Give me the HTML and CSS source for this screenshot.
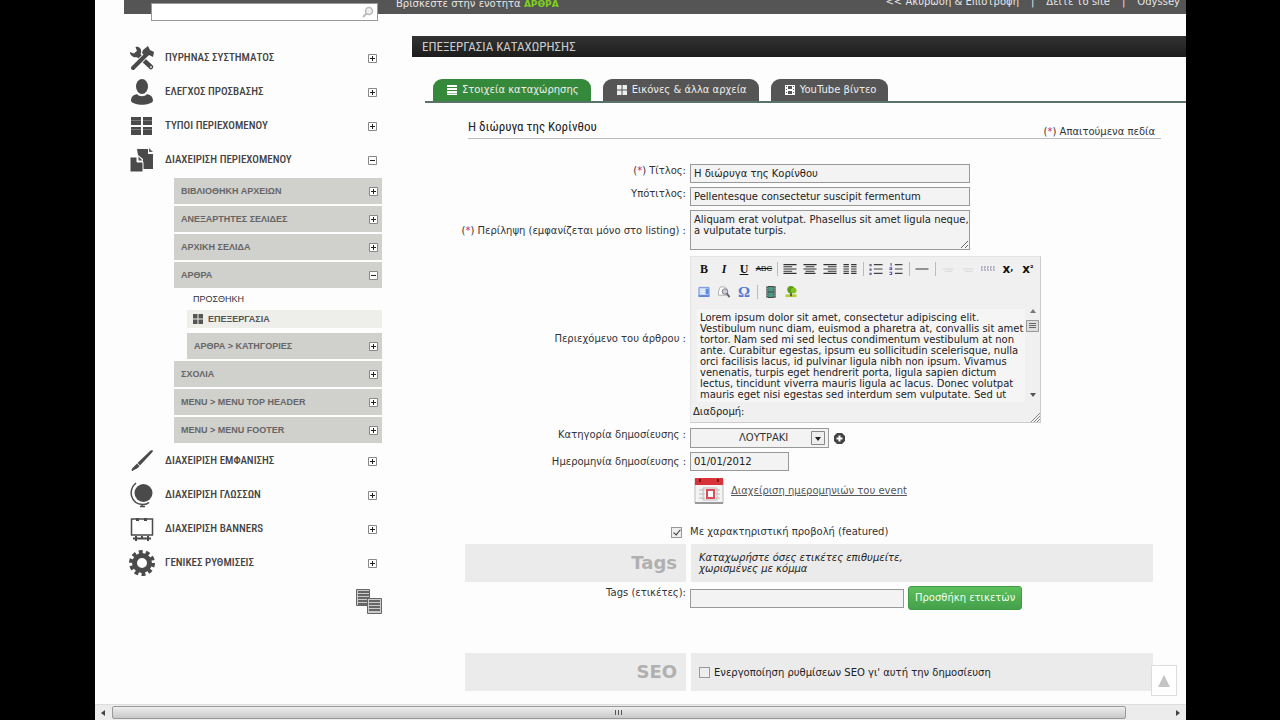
FILE: index.html
```html
<!DOCTYPE html>
<html lang="el">
<head>
<meta charset="utf-8">
<title>Επεξεργασία καταχώρησης</title>
<link rel="stylesheet" href="styles.css">
</head>
<body>
<svg class="defs" aria-hidden="true">
  <symbol id="plus" viewBox="0 0 9 9"><path d="M.5.5h8v8h-8z" fill="#fff" stroke="#888"/><path d="M2 4.500h5M4.500 2v5" stroke="#222"/></symbol>
  <symbol id="minus" viewBox="0 0 9 9"><path d="M.5.5h8v8h-8z" fill="#fff" stroke="#888"/><path d="M2 4.500h5" stroke="#222"/></symbol>
  <symbol id="grid4" viewBox="0 0 10 10"><path d="M0 0h4.500v4.500H0zM5.500 0H10v4.500H5.500zM0 5.500h4.500V10H0zM5.500 5.500H10V10H5.500z" fill="currentColor"/></symbol>
</svg>
<div class="window">
  <header class="topbar">
    <form class="search"><input type="search" aria-label="Αναζήτηση">
      <svg class="lens" viewBox="0 0 12 12"><circle cx="7" cy="5" r="3.500" fill="#eee" stroke="#bbb" stroke-width="1.500"/><path d="M4.500 7.500 1 11" stroke="#bbb" stroke-width="2"/></svg>
    </form>
    <p class="where">Βρίσκεστε στην ενότητα <b>ΑΡΘΡΑ</b></p>
    <nav class="toplinks"><a href="#">&lt;&lt; Ακύρωση &amp; Επιστροφή</a><span>|</span><a href="#">Δείτε το site</a><span>|</span><a href="#">Odyssey</a></nav>
  </header>
  <div class="main">
    <nav class="sidebar">
      <ul class="menu">
        <li><a href="#" class="item">
          <svg class="ico" viewBox="0 0 26 26"><path d="M8 9 22 22" stroke="#4a4a4a" stroke-width="4.500" stroke-linecap="round"/><path d="M1 7l4 1.500L8 6 6.500 2C10 1 13 4 12 8l-3 4C5 13 1 11 1 7z" fill="#4a4a4a"/><path d="M4 23 18 9" stroke="#fdfdfd" stroke-width="6"/><path d="M4 23 18 9" stroke="#4a4a4a" stroke-width="4" stroke-linecap="round"/><path d="M14 5l5-4 2 4 4 2-1 5-4-2-3 2-4-4z" fill="#4a4a4a"/><circle cx="22" cy="22" r="1" fill="#ddd"/></svg>
          <span>ΠΥΡΗΝΑΣ ΣΥΣΤΗΜΑΤΟΣ</span><svg class="box"><use href="#plus"/></svg></a></li>
        <li><a href="#" class="item">
          <svg class="ico" viewBox="0 0 26 26"><ellipse cx="13" cy="7.500" rx="6" ry="7.500" fill="#4a4a4a"/><path d="M2 22c0-5 3-6 6-7 2 3 8 3 10 0 3 1 6 2 6 7-3 5-19 5-22 0z" fill="#4a4a4a"/></svg>
          <span>ΕΛΕΓΧΟΣ ΠΡΟΣΒΑΣΗΣ</span><svg class="box"><use href="#plus"/></svg></a></li>
        <li><a href="#" class="item">
          <svg class="ico" viewBox="0 0 26 26"><path d="M2 4h10v8H2zM14 4h9v8h-9zM2 14h10v8H2zM14 14h9v8h-9z" fill="#4a4a4a"/><path d="M2 7.500h10M14 7.500h9M2 16.500h10M14 16.500h9" stroke="#777"/></svg>
          <span>ΤΥΠΟΙ ΠΕΡΙΕΧΟΜΕΝΟΥ</span><svg class="box"><use href="#plus"/></svg></a></li>
        <li><a href="#" class="item">
          <svg class="ico" viewBox="0 0 26 26"><path d="M8 2h11v5h5v15H14V12L9 8z" fill="#4a4a4a"/><path d="M20 1l4 4h-4z" fill="#666"/><path d="M1 10h7v5h6v10H1z" fill="#4a4a4a" stroke="#fdfdfd"/><path d="M9.500 9.500l4 4h-4z" fill="#555"/></svg>
          <span>ΔΙΑΧΕΙΡΙΣΗ ΠΕΡΙΕΧΟΜΕΝΟΥ</span><svg class="box"><use href="#minus"/></svg></a>
          <ul class="submenu">
            <li><a href="#" class="sub"><span>ΒΙΒΛΙΟΘΗΚΗ ΑΡΧΕΙΩΝ</span><svg class="box"><use href="#plus"/></svg></a></li>
            <li><a href="#" class="sub"><span>ΑΝΕΞΑΡΤΗΤΕΣ ΣΕΛΙΔΕΣ</span><svg class="box"><use href="#plus"/></svg></a></li>
            <li><a href="#" class="sub"><span>ΑΡΧΙΚΗ ΣΕΛΙΔΑ</span><svg class="box"><use href="#plus"/></svg></a></li>
            <li><a href="#" class="sub"><span>ΑΡΘΡΑ</span><svg class="box"><use href="#minus"/></svg></a>
              <ul class="leafs">
                <li><a href="#" class="leaf">ΠΡΟΣΘΗΚΗ</a></li>
                <li><a href="#" class="leaf current"><svg class="mini"><use href="#grid4"/></svg>ΕΠΕΞΕΡΓΑΣΙΑ</a></li>
                <li><a href="#" class="sub"><span>ΑΡΘΡΑ &gt; ΚΑΤΗΓΟΡΙΕΣ</span><svg class="box"><use href="#plus"/></svg></a></li>
              </ul></li>
            <li><a href="#" class="sub"><span>ΣΧΟΛΙΑ</span><svg class="box"><use href="#plus"/></svg></a></li>
            <li><a href="#" class="sub"><span>MENU &gt; MENU TOP HEADER</span><svg class="box"><use href="#plus"/></svg></a></li>
            <li><a href="#" class="sub"><span>MENU &gt; MENU FOOTER</span><svg class="box"><use href="#plus"/></svg></a></li>
          </ul></li>
        <li><a href="#" class="item">
          <svg class="ico" viewBox="0 0 26 26"><path d="M23 2c1 0 1 1 .500 2L11 17.500 8.500 15 21 3z" fill="#4a4a4a"/><path d="M8 15.500l2.500 2.500c-2 3-4 3-7 5-1.500 0-1-1.500 0-3z" fill="#4a4a4a"/></svg>
          <span>ΔΙΑΧΕΙΡΙΣΗ ΕΜΦΑΝΙΣΗΣ</span><svg class="box"><use href="#plus"/></svg></a></li>
        <li><a href="#" class="item">
          <svg class="ico" viewBox="0 0 26 26"><circle cx="14.500" cy="11" r="9" fill="#4a4a4a"/><path d="M7 1C-1 8 1 22 14 22.500c3 0 5-1 6-2M13 22v3M11 24.500h5" fill="none" stroke="#4a4a4a" stroke-width="1.500"/></svg>
          <span>ΔΙΑΧΕΙΡΙΣΗ ΓΛΩΣΣΩΝ</span><svg class="box"><use href="#plus"/></svg></a></li>
        <li><a href="#" class="item">
          <svg class="ico" viewBox="0 0 26 26"><path d="M2.500 3h21v16h-21z" fill="#fff" stroke="#4a4a4a" stroke-width="1.500"/><path d="M7 2h3v3H7zM15 2h3v3h-3z" fill="#4a4a4a"/><path d="M4 22.500h18M7 20v5M19 20v5M13 20v2" stroke="#4a4a4a" stroke-width="2"/></svg>
          <span>ΔΙΑΧΕΙΡΙΣΗ BANNERS</span><svg class="box"><use href="#plus"/></svg></a></li>
        <li><a href="#" class="item">
          <svg class="ico" viewBox="0 0 26 26"><circle cx="13" cy="13" r="7.500" fill="none" stroke="#4a4a4a" stroke-width="5"/><circle cx="13" cy="13" r="11" fill="none" stroke="#4a4a4a" stroke-width="4" stroke-dasharray="3.800 3.110"/></svg>
          <span>ΓΕΝΙΚΕΣ ΡΥΘΜΙΣΕΙΣ</span><svg class="box"><use href="#plus"/></svg></a></li>
      </ul>
      <button class="collapse" aria-label="Σύμπτυξη μενού"><svg viewBox="0 0 26 26"><path d="M.5.5h13v16H.5z" fill="#ccc" stroke="#666"/><path d="M2 3h11M2 6h11M2 9h11M2 12h11M2 15h11" stroke="#444" stroke-width="1.500"/><path d="M11.500 9.500h14v15h-14z" fill="#ccc" stroke="#666"/><path d="M13 12h11M13 15h11M13 18h11M13 21h11" stroke="#444" stroke-width="1.500"/></svg></button>
    </nav>
    <main class="content">
      <h1>ΕΠΕΞΕΡΓΑΣΙΑ ΚΑΤΑΧΩΡΗΣΗΣ</h1>
      <nav class="tabs">
        <a href="#" class="tab active"><svg class="mini" viewBox="0 0 10 10"><path d="M0 1h10M0 4h10M0 7h10M0 9.500h10" stroke="#fff" stroke-width="2"/></svg>Στοιχεία καταχώρησης</a>
        <a href="#" class="tab"><svg class="mini"><use href="#grid4"/></svg>Εικόνες &amp; άλλα αρχεία</a>
        <a href="#" class="tab"><svg class="mini" viewBox="0 0 10 10"><path d="M0 0h10v10H0z" fill="#fff"/><path d="M3 1h4v3H3zM3 6h4v3H3zM1 1h1v1H1zM1 4h1v1H1zM1 7h1v1H1zM8 1h1v1H8zM8 4h1v1H8zM8 7h1v1H8z" fill="#555"/></svg>YouTube βίντεο</a>
      </nav>
      <div class="heading"><h2>Η διώρυγα της Κορίνθου</h2><p>(<i class="req">*</i>) Απαιτούμενα πεδία</p></div>
      <form class="fields">
        <div class="row"><label for="f1">(<i class="req">*</i>) Τίτλος:</label><input id="f1" class="text wide" value="Η διώρυγα της Κορίνθου"></div>
        <div class="row"><label for="f2">Υπότιτλος:</label><input id="f2" class="text wide" value="Pellentesque consectetur suscipit fermentum"></div>
        <div class="row mid"><label for="f3">(<i class="req">*</i>) Περίληψη (εμφανίζεται μόνο στο listing) :</label><textarea id="f3" class="text summary">Aliquam erat volutpat. Phasellus sit amet ligula neque,
a vulputate turpis.</textarea></div>
        <div class="row mid"><label for="f4">Περιεχόμενο του άρθρου :</label>
          <div class="editor">
            <div class="tools">
              <button type="button" class="b">B</button><button type="button" class="i">I</button><button type="button" class="u">U</button><button type="button" class="s">ABC</button><hr>
              <button type="button" aria-label="Αριστερά"><svg viewBox="0 0 12 11"><path d="M0 1.500h12M0 3.500h8M0 5.500h12M0 7.500h8M0 9.500h12" stroke="#333"/></svg></button>
              <button type="button" aria-label="Κέντρο"><svg viewBox="0 0 12 11"><path d="M0 1.500h12M2 3.500h8M0 5.500h12M2 7.500h8M1 9.500h10" stroke="#333"/></svg></button>
              <button type="button" aria-label="Δεξιά"><svg viewBox="0 0 12 11"><path d="M0 1.500h12M4 3.500h8M0 5.500h12M4 7.500h8M0 9.500h12" stroke="#333"/></svg></button>
              <button type="button" aria-label="Πλήρης"><svg viewBox="0 0 12 11"><path d="M0 1.500h5M7 1.500h5M0 3.500h5M7 3.500h5M0 5.500h5M7 5.500h5M0 7.500h5M7 7.500h5M0 9.500h5M7 9.500h5" stroke="#333"/></svg></button><hr>
              <button type="button" aria-label="Κουκκίδες"><svg viewBox="0 0 12 11"><path d="M4 1.500h8M4 5.500h8M4 9.500h8" stroke="#444"/><path d="M0 1h2v2H0zM0 5h2v2H0zM0 9h2v2H0z" fill="#668"/></svg></button>
              <button type="button" aria-label="Αρίθμηση"><svg viewBox="0 0 12 11"><path d="M5 1.500h7M5 5.500h7M5 9.500h7" stroke="#444"/><path d="M1.500 0v3M0 4.500h2v1.500H0M0 8.500h2v2H0" fill="none" stroke="#55a"/></svg></button><hr>
              <button type="button" aria-label="Γραμμή"><svg viewBox="0 0 12 11"><path d="M0 5.500h12" stroke="#444"/></svg></button><hr>
              <button type="button" aria-label="Αναίρεση"><svg viewBox="0 0 12 11"><path d="M1 5.500h10M3 7.500h7" stroke="#d8d8dc"/></svg></button>
              <button type="button" aria-label="Επανάληψη"><svg viewBox="0 0 12 11"><path d="M1 5.500h10M3 7.500h7" stroke="#d8d8dc"/></svg></button>
              <button type="button" aria-label="Άγκυρα"><svg viewBox="0 0 14 11"><path d="M0 3.500h14M0 6.500h14" stroke="#88a" stroke-dasharray="2 1"/><path d="M0 5h14" stroke="#aab" stroke-dasharray="1 2"/></svg></button>
              <button type="button" class="x">x<sub>,</sub></button><button type="button" class="x">x<sup>²</sup></button>
            </div>
            <div class="tools">
              <button type="button" aria-label="Πίνακας"><svg viewBox="0 0 14 13"><path d="M1.500 1.500h11v9h-11z" fill="#bcd4fa" stroke="#6f93d8"/><path d="M3 4h5M3 6h5M3 8h5" stroke="#fff"/><path d="M9 3h3v6H9zM1 10h12v2H1z" fill="#5d86dc"/></svg></button>
              <button type="button" aria-label="Προεπισκόπηση"><svg viewBox="0 0 14 13"><path d="M3 1h5l2 2v7H1V6z" fill="#fff" stroke="#aaa"/><circle cx="8" cy="6" r="3" fill="#ccd" stroke="#777"/><path d="M10 8l3 4" stroke="#666" stroke-width="2"/></svg></button>
              <button type="button" class="omega">Ω</button><hr class="gap">
              <button type="button" aria-label="Βίντεο"><svg viewBox="0 0 14 13"><path d="M2 0h10v13H2z" fill="#444"/><path d="M4 1h6v5H4zM4 7h6v5H4z" fill="#4a9a86"/><path d="M3 0v13M11 0v13" stroke="#ccc" stroke-dasharray="1 1"/></svg></button>
              <button type="button" aria-label="Εικόνα"><svg viewBox="0 0 14 13"><path d="M1 9h12v3H1z" fill="#b3cf35"/><path d="M6 6h2v5H6z" fill="#554"/><circle cx="7" cy="4" r="4" fill="#5a9e16"/><circle cx="10" cy="5" r="3" fill="#82c01e"/></svg></button>
            </div>
            <div class="body">
              <textarea id="f4">Lorem ipsum dolor sit amet, consectetur adipiscing elit.
Vestibulum nunc diam, euismod a pharetra at, convallis sit amet
tortor. Nam sed mi sed lectus condimentum vestibulum at non
ante. Curabitur egestas, ipsum eu sollicitudin scelerisque, nulla
orci facilisis lacus, id pulvinar ligula nibh non ipsum. Vivamus
venenatis, turpis eget hendrerit porta, ligula sapien dictum
lectus, tincidunt viverra mauris ligula ac lacus. Donec volutpat
mauris eget nisi egestas sed interdum sem vulputate. Sed ut</textarea>
              <div class="vbar"><svg viewBox="0 0 6 4"><path d="M3 0l3 4H0z" fill="#777"/></svg><svg class="thumb" viewBox="0 0 13 12"><path d="M.5.500h12v11H.5z" fill="#ddd" stroke="#999"/><path d="M3 3.500h7M3 5.500h7M3 7.500h7" stroke="#666"/></svg><svg class="down" viewBox="0 0 6 4"><path d="M0 0h6L3 4z" fill="#555"/></svg></div>
            </div>
            <div class="path"><span>Διαδρομή:</span><svg viewBox="0 0 10 10"><path d="M1 10l9-9M4 10l6-6M7 10l3-3" stroke="#888"/></svg></div>
          </div></div>
        <div class="row category"><label for="f5">Κατηγορία δημοσίευσης :</label><div class="line"><span class="pick"><select id="f5"><option>ΛΟΥΤΡΑΚΙ</option></select><svg viewBox="0 0 14 14"><path d="M.5.500h13v13H.5z" fill="#eee" stroke="#888"/><path d="M4 6h6l-3 4z" fill="#222"/></svg></span><button type="button" class="add" aria-label="Προσθήκη"><svg viewBox="0 0 11 11"><path d="M3 0h5l3 3v5l-3 3H3L0 8V3z" fill="#444"/><path d="M5.500 2.500v6M2.500 5.500h6" stroke="#fff" stroke-width="2"/></svg></button></div></div>
        <div class="row mid"><label for="f6">Ημερομηνία δημοσίευσης :</label><input id="f6" class="text date" value="01/01/2012"></div>
        <div class="row event"><div class="line"><svg class="cal" viewBox="0 0 30 28"><path d="M1 2h28v24H1z" fill="#f4f4f4" stroke="#bbb"/><path d="M1 25h28v2H1z" fill="#999"/><path d="M1 1h28v7H1z" fill="#d8333b"/><path d="M5 2h2v3H5zM23 2h2v3h-2z" fill="#811"/><path d="M5 13h6M5 17h6M5 21h6M22 13h4M22 17h4M22 21h4M9 11h14v12H9z" fill="none" stroke="#bbb"/><path d="M13 13h7v8h-7z" fill="#fff" stroke="#e04a58" stroke-width="2"/></svg><a href="#">Διαχείριση ημερομηνιών του event</a></div></div>
        <div class="row featured"><span class="end"><input type="checkbox" id="f7" checked></span><label for="f7">Με χαρακτηριστική προβολή (featured)</label></div>
        <div class="band"><h3>Tags</h3><p><em>Καταχωρήστε όσες ετικέτες επιθυμείτε,<br>χωρισμένες με κόμμα</em></p></div>
        <div class="row"><label for="f8">Tags (ετικέτες):</label><div class="line tagline"><input id="f8" class="text tags"><button type="button" class="green">Προσθήκη ετικετών</button></div></div>
        <div class="band seo"><h3>SEO</h3><p><input type="checkbox" id="f9"><label for="f9">Ενεργοποίηση ρυθμίσεων SEO γι' αυτή την δημοσίευση</label></p></div>
      </form>
    </main>
  </div>
  <button class="totop" aria-label="Επάνω"><svg viewBox="0 0 12 12"><path d="M6 0l6 12H0z" fill="#c4c4c4"/></svg></button>
  <div class="hbar"><svg viewBox="0 0 4 6"><path d="M4 0v6L0 3z" fill="#444"/></svg><div class="track"><div class="handle"><svg viewBox="0 0 7 5"><path d="M.5 0v5M3.500 0v5M6.500 0v5" stroke="#555"/></svg></div></div><svg viewBox="0 0 4 6"><path d="M0 0v6l4-3z" fill="#444"/></svg></div>
</div>
</body>
</html>
```
FILE: styles.css
```css
* { box-sizing: border-box; }
body {
  margin: 0;
  padding: 0 94px 0 95px;
  background: #000;
  color: #333;
  font: 10px/12px "DejaVu Sans", Verdana, sans-serif;
}
h1, h2, h3, p, ul { margin: 0; padding: 0; font-weight: normal; }
ul { list-style: none; }
a { color: inherit; text-decoration: none; }
button, input, select, textarea { margin: 0; font: inherit; color: inherit; border-radius: 0; }
button { padding: 0; border: 0; background: none; }
svg { display: block; flex: none; }
.defs { position: absolute; width: 0; height: 0; }
.window {
  position: relative;
  display: flex;
  flex-direction: column;
  height: 100vh;
  overflow: hidden;
  background: #fdfdfd;
}

/* top bar */
.topbar {
  display: flex;
  height: 14px;
  margin-left: 29px;
  padding-left: 27px;
  background: #555;
  color: #e6e6e6;
}
.search { position: relative; width: 227px; height: 18px; margin-top: 3px; }
.search input { width: 100%; height: 100%; border: 1px solid #999; background: #fff; }
.lens { position: absolute; top: 3px; right: 4px; width: 12px; height: 12px; }
.where { margin: -2px 0 0 18px; }
.where b { color: #7fd01c; font-size: 9px; }
.toplinks { display: flex; gap: 12px; margin: -4px 6px 0 auto; }

.main { display: flex; flex: 1; gap: 30px; min-height: 0; padding-left: 34px; }

/* sidebar */
.sidebar { width: 253px; padding-top: 27px; }
.item { display: flex; align-items: center; height: 34px; padding-right: 5px; font: 500 11px/14px "Liberation Sans Narrow", "Roboto Condensed", "Liberation Sans", sans-serif; color: #444; }
.ico { width: 26px; height: 26px; margin-right: 10px; }
.box { width: 9px; height: 9px; margin-left: auto; }
.submenu { display: grid; gap: 2px; margin: 1px 0 1px 45px; }
.sub { display: flex; align-items: center; height: 26px; padding: 0 4px 0 7px; background: #d0d0cd; font: bold 9px/12px "Liberation Sans", Arial, sans-serif; color: #666; }
.leafs { padding: 0 0 0 13px; }
.leaf { display: flex; align-items: center; height: 22px; padding-left: 6px; font: 9px/12px "Liberation Sans", Arial, sans-serif; color: #333; }
.leaf.current { height: 18px; margin-bottom: 5px; background: #eeeeea; font-weight: bold; color: #555; }
.mini { width: 10px; height: 10px; margin-right: 5px; }
.collapse { display: block; margin: 9px 0 0 auto; }
.collapse svg { width: 26px; height: 26px; }

/* content */
.content { flex: 1; padding-top: 22px; }
h1 { height: 21px; padding-left: 10px; background: linear-gradient(#333, #1c1c1c); color: #ccc; font: 13px/21px "Liberation Sans Narrow", "Roboto Condensed", "Open Sans", sans-serif; }
.tabs { display: flex; gap: 12px; margin: 22px 0 0 13px; padding-left: 8px; border-bottom: 2px solid #5b7268; }
.tab { display: flex; align-items: center; height: 22px; padding: 0 12px 0 14px; border-radius: 9px 9px 0 0; background: #555; color: #eee; }
.tab.active { background: #35893a; }
.heading { display: flex; justify-content: space-between; align-items: flex-end; height: 36px; margin: 0 25px 0 56px; padding-right: 6px; border-bottom: 1px solid #bbb; }
h2 { font: 13px/22px "Liberation Sans Narrow", "Roboto Condensed", "Open Sans", sans-serif; color: #222; }
.req { font-style: normal; color: #d0244a; }

/* form */
.fields { display: grid; gap: 4px; margin: 25px 33px 0 53px; }
.row { display: grid; grid-template-columns: 221px 1fr; column-gap: 4px; align-items: start; }
.row > label:first-child { display: flex; justify-content: flex-end; padding-top: 1px; white-space: pre; }
.row.mid { align-items: center; }
.text { height: 19px; padding: 0 3px; border: 1px solid #999; background: #f3f3f3; color: #222; }
.wide { width: 280px; }
.summary { display: block; width: 280px; height: 40px; padding: 3px; line-height: 11px; white-space: pre; overflow: hidden; }
.editor { width: 351px; margin-top: 2px; background: #f0f0f0; border: 1px solid #e4e4e4; border-right-color: #ccc; border-bottom-color: #ccc; }
.tools { display: flex; height: 23px; padding-left: 3px; align-items: center; }
.tools button { display: flex; flex: none; justify-content: center; align-items: center; width: 20px; height: 20px; font: bold 12px/12px "Liberation Serif", serif; color: #111; }
.tools button svg { width: 14px; height: 12px; }
.tools hr { width: 1px; height: 14px; margin: 0 2px 0 3px; border: 0; background: #bbb; }
.tools hr.gap { margin: 0 3px; }
.tools .i { font-style: italic; }
.tools .u { text-decoration: underline; }
.tools .s { font: 8px/10px "Liberation Sans", sans-serif; text-decoration: line-through; }
.tools .x { font: bold 12px/12px "DejaVu Sans", sans-serif; }
.tools sub, .tools sup { font-size: 8px; line-height: 8px; }
.tools .omega { font-size: 15px; color: #4c78d8; }
.body { display: flex; margin: 6px 0 0 6px; }
.body textarea { flex: 1; height: 93px; padding: 3px; border: 0; background: #f5f5f5; line-height: 11px; white-space: pre; overflow: hidden; resize: none; color: #222; }
.vbar { display: flex; flex-direction: column; align-items: center; gap: 7px; width: 15px; }
.vbar svg { width: 6px; height: 4px; }
.vbar .thumb { width: 13px; height: 12px; }
.vbar .down { margin: auto 0 5px; }
.path { display: flex; justify-content: space-between; align-items: flex-end; height: 20px; padding: 0 0 0 2px; color: #222; }
.path span { align-self: center; }
.path svg { width: 10px; height: 10px; }
.line { display: flex; align-items: center; }
.category { margin-top: 1px; }
.pick { position: relative; width: 139px; height: 20px; }
.pick select { width: 100%; height: 100%; padding-left: 48px; border: 1px solid #999; background: #f3f3f3; appearance: none; }
.pick svg { position: absolute; top: 3px; right: 4px; width: 14px; height: 14px; pointer-events: none; }
.add { margin-left: 5px; }
.add svg { width: 11px; height: 11px; }
.date { width: 99px; }
.event { margin-top: 2px; }
.event .line { grid-column: 2; gap: 7px; padding-left: 4px; }
.event a { text-decoration: underline; color: #555; }
.cal { width: 30px; height: 28px; }
.featured { margin: 17px 0 2px; align-items: center; }
.end { display: flex; justify-content: flex-end; padding-right: 4px; }
input[type="checkbox"] { position: relative; width: 11px; height: 11px; border: 1px solid #999; background: #eee; appearance: none; }
input[type="checkbox"]:checked::after { content: ""; position: absolute; left: 3px; top: 0; width: 3px; height: 6px; border: solid #333; border-width: 0 1px 1px 0; transform: rotate(40deg); }
.band { display: grid; grid-template-columns: 221px 1fr; gap: 5px; height: 38px; }
.band h3, .band p { display: flex; align-items: center; background: #ebebeb; }
.band h3 { justify-content: flex-end; padding-right: 9px; color: #b0b0b0; font: bold 18px/22px "DejaVu Sans", Verdana, sans-serif; }
.band p { gap: 4px; padding-left: 8px; line-height: 11px; color: #222; }
.seo { margin-top: 39px; }
.tagline { gap: 4px; }
.tags { width: 214px; }
.green { height: 24px; padding: 0 6px; border: 1px solid #3f9a44; border-radius: 3px; background: linear-gradient(#5cc05c, #44a04a); color: #f0fff0; }

.totop { position: absolute; right: 9px; bottom: 24px; display: flex; justify-content: center; align-items: center; width: 26px; height: 31px; border: 1px solid #ddd; background: #fff; }
.totop svg { width: 12px; height: 12px; }

/* horizontal scroll bar */
.hbar { display: flex; flex: none; align-items: center; gap: 7px; height: 16px; padding: 0 6px; border-top: 1px solid #ddd; background: #ececec; }
.hbar > svg { width: 4px; height: 6px; }
.track { flex: 1; padding-right: 4%; }
.handle { display: flex; justify-content: center; align-items: center; height: 13px; border: 1px solid #999; border-radius: 2px; background: linear-gradient(#eee, #c8c8c8); }
.handle svg { width: 7px; height: 5px; }
```
